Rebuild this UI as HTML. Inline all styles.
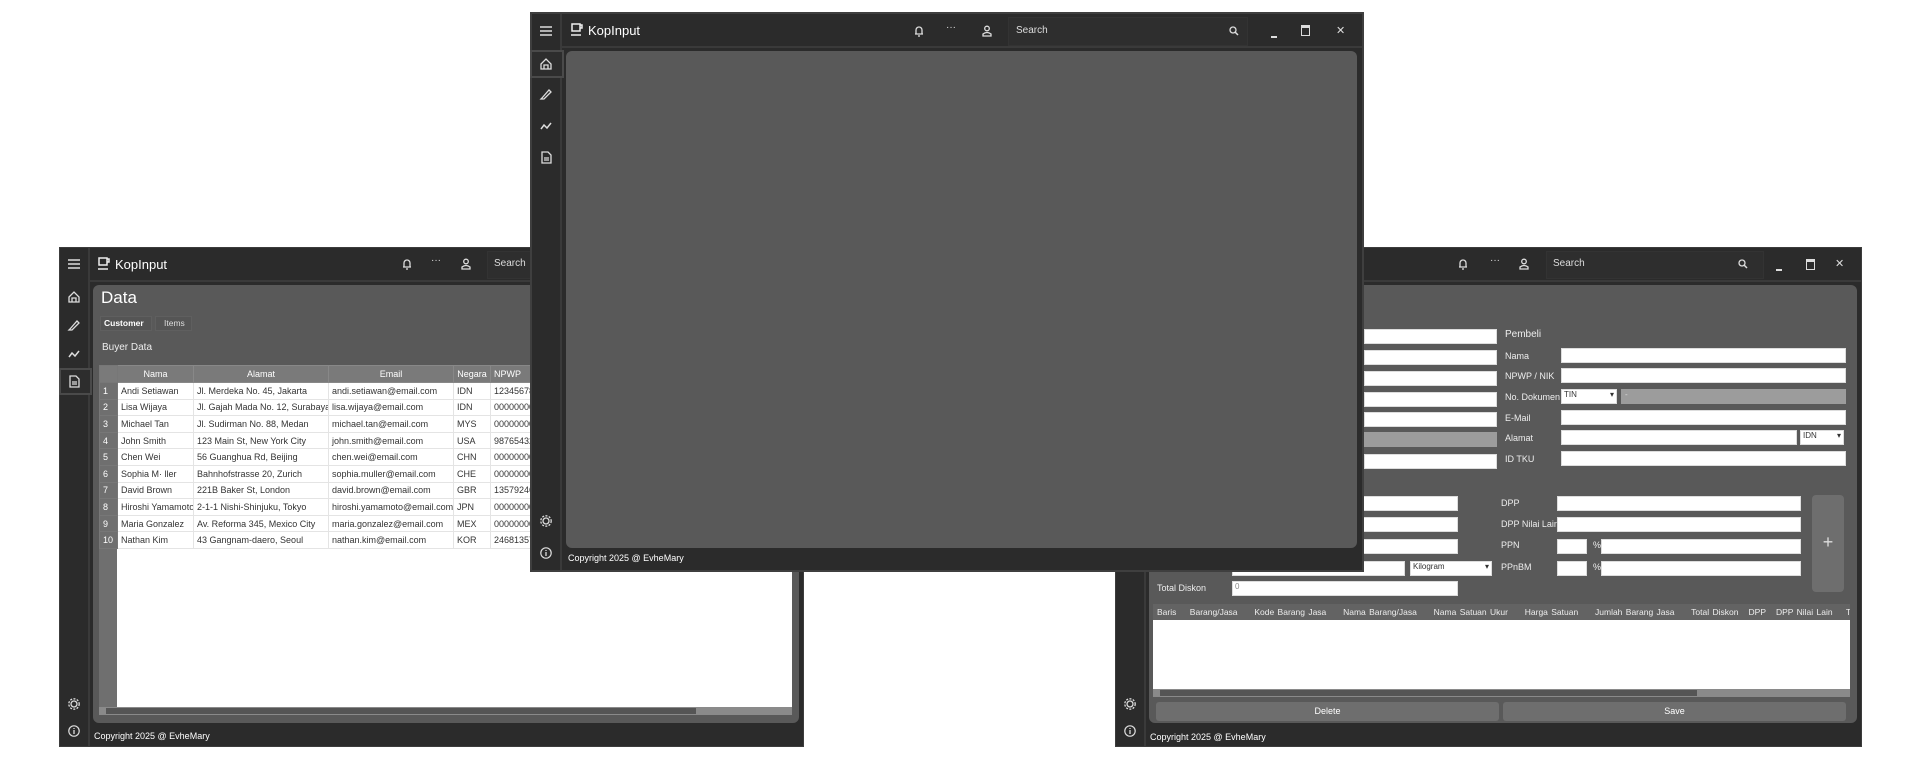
<!DOCTYPE html>
<html><head><meta charset="utf-8"><style>
*{box-sizing:border-box;margin:0;padding:0}
body{width:1920px;height:765px;background:#fff;position:relative;overflow:hidden;font-family:"Liberation Sans",sans-serif;color:#fff}
.a{position:absolute}
.win{position:absolute;background:#2b2b2b;border:1px solid #3c3c3c}
.hdr{position:absolute;left:0;right:0;top:0;height:34px;background:#2b2b2b;border-bottom:2px solid #3a3a3a}
.side{position:absolute;left:0;top:0;bottom:0;width:30px;border-right:2px solid #3a3a3a;background:#2b2b2b}
.panel{position:absolute;background:#595959;border-radius:6px}
.t{font-size:10px;white-space:nowrap}
.in{position:absolute;background:#fff;height:15px;border:1px solid #ddd}
.gr{background:#9c9c9c;border-color:#9c9c9c}
.lbl{position:absolute;font-size:9px;color:#eee;white-space:nowrap}
svg{position:absolute;overflow:visible}
table{border-collapse:collapse;font-size:9px;color:#333}
td{height:16.6px;border:1px solid #e4e4e4;padding:0 3px;white-space:nowrap;overflow:hidden}
.f{position:absolute;left:0;top:0;width:100%;height:100%}
</style></head><body>

<!-- LEFT WINDOW -->
<div class="win" style="left:59px;top:247px;width:745px;height:500px">
 <div class="hdr"></div>
 <div class="side"></div>
 <svg style="left:7px;top:10px" width="14" height="12"><path d="M1 2H13M1 6H13M1 10H13" stroke="#ddd" stroke-width="1.5"/></svg>
 <svg style="left:37px;top:9px" width="14" height="15"><path d="M2 1H10V8H2Z M10 2H12V5H10 M1 12H11" stroke="#eee" fill="none" stroke-width="1.5"/></svg>
 <div class="a" style="left:55px;top:9px;font-size:13px;color:#fff">KopInput</div>
 <svg style="left:342px;top:10px" width="10" height="12"><path d="M2 9V5A3 3 0 0 1 8 5V9H2M1 9H9M5 10V12" stroke="#ddd" fill="none" stroke-width="1.3"/></svg>
 <div class="a t" style="left:371px;top:7px;color:#ddd">···</div>
 <svg style="left:401px;top:10px" width="10" height="12"><circle cx="5" cy="3.5" r="2.3" stroke="#ddd" fill="none" stroke-width="1.3"/><path d="M1 11V9Q5 6 9 9V11Z" stroke="#ddd" fill="none" stroke-width="1.3"/></svg>
 <div class="a" style="left:427px;top:3px;width:50px;height:28px;background:#2e2e2e;border:1px solid #333"></div>
 <div class="a t" style="left:434px;top:10px;color:#ddd">Search</div>
 <svg style="left:8px;top:43px" width="12" height="12"><path d="M1 6L6 1L11 6V11H1Z M4 11V7H8V11" stroke="#ddd" fill="none" stroke-width="1.3"/></svg>
 <svg style="left:8px;top:71px" width="12" height="12"><path d="M2 10L9 2L11 4L4 11L1 11Z" stroke="#ddd" fill="none" stroke-width="1.3"/></svg>
 <svg style="left:8px;top:100px" width="12" height="12"><path d="M1 9L4 5L7 8L11 3" stroke="#ddd" fill="none" stroke-width="1.5"/></svg>
 <div class="a" style="left:-1px;top:120px;width:33px;height:27px;border:2px solid #4a4a4a;background:#2d2d2d"></div>
 <svg style="left:9px;top:127px" width="11" height="13"><path d="M1 1H7L10 4V12H1Z M3 7H8M3 9H8" stroke="#ddd" fill="none" stroke-width="1.3"/></svg>
 <svg style="left:8px;top:450px" width="12" height="12"><circle cx="6" cy="6" r="3" stroke="#ddd" fill="none" stroke-width="1.3"/><circle cx="6" cy="6" r="5.2" stroke="#ddd" fill="none" stroke-width="1.3" stroke-dasharray="2 1.4"/></svg>
 <svg style="left:8px;top:477px" width="12" height="12"><circle cx="6" cy="6" r="5.2" stroke="#ddd" fill="none" stroke-width="1.2"/><path d="M6 5V9M6 3V4" stroke="#ddd" stroke-width="1.3"/></svg>
 <div class="panel" style="left:33px;top:37px;width:706px;height:438px"></div>
 <div class="a" style="left:41px;top:40px;font-size:17px">Data</div>
 <div class="a" style="left:40px;top:68px;width:52px;height:15px;background:#555;border:1px solid #5f5f5f"></div>
 <div class="a" style="left:44px;top:70px;font-size:8.5px;font-weight:bold">Customer</div>
 <div class="a" style="left:95px;top:68px;width:37px;height:15px;background:#555;border:1px solid #5f5f5f"></div>
 <div class="a" style="left:104px;top:70px;font-size:8.5px;color:#ddd">Items</div>
 <div class="a" style="left:42px;top:94px;font-size:10px;color:#eee">Buyer Data</div>
 <div class="a" style="left:39px;top:117px;width:693px;height:350px;background:#fff"></div>
 <div class="a" style="left:39px;top:117px;width:18px;height:350px;background:#6f6f6f"></div>
 <div class="a" style="left:39px;top:117px;width:693px;height:17px;background:#7a7a7a"></div>
 <table class="a" style="left:39px;top:117px;table-layout:fixed;width:700px">
  <colgroup><col style="width:18px"><col style="width:76px"><col style="width:135px"><col style="width:125px"><col style="width:37px"><col style="width:309px"></colgroup>
  <tr style="color:#fff;text-align:center"><td style="border-color:#777;height:17px"></td><td style="border-color:#888">Nama</td><td style="border-color:#888">Alamat</td><td style="border-color:#888">Email</td><td style="border-color:#888">Negara</td><td style="border-color:#888;text-align:left">NPWP</td></tr>
  <tr><td style="color:#fff;border-color:#777">1</td><td>Andi Setiawan</td><td>Jl. Merdeka No. 45, Jakarta</td><td>andi.setiawan@email.com</td><td>IDN</td><td>123456789</td></tr>
  <tr><td style="color:#fff;border-color:#777">2</td><td>Lisa Wijaya</td><td>Jl. Gajah Mada No. 12, Surabaya</td><td>lisa.wijaya@email.com</td><td>IDN</td><td>000000000</td></tr>
  <tr><td style="color:#fff;border-color:#777">3</td><td>Michael Tan</td><td>Jl. Sudirman No. 88, Medan</td><td>michael.tan@email.com</td><td>MYS</td><td>000000000</td></tr>
  <tr><td style="color:#fff;border-color:#777">4</td><td>John Smith</td><td>123 Main St, New York City</td><td>john.smith@email.com</td><td>USA</td><td>987654321</td></tr>
  <tr><td style="color:#fff;border-color:#777">5</td><td>Chen Wei</td><td>56 Guanghua Rd, Beijing</td><td>chen.wei@email.com</td><td>CHN</td><td>000000000</td></tr>
  <tr><td style="color:#fff;border-color:#777">6</td><td>Sophia M· ller</td><td>Bahnhofstrasse 20, Zurich</td><td>sophia.muller@email.com</td><td>CHE</td><td>000000000</td></tr>
  <tr><td style="color:#fff;border-color:#777">7</td><td>David Brown</td><td>221B Baker St, London</td><td>david.brown@email.com</td><td>GBR</td><td>135792468</td></tr>
  <tr><td style="color:#fff;border-color:#777">8</td><td>Hiroshi Yamamoto</td><td>2-1-1 Nishi-Shinjuku, Tokyo</td><td>hiroshi.yamamoto@email.com</td><td>JPN</td><td>000000000</td></tr>
  <tr><td style="color:#fff;border-color:#777">9</td><td>Maria Gonzalez</td><td>Av. Reforma 345, Mexico City</td><td>maria.gonzalez@email.com</td><td>MEX</td><td>000000000</td></tr>
  <tr><td style="color:#fff;border-color:#777">10</td><td>Nathan Kim</td><td>43 Gangnam-daero, Seoul</td><td>nathan.kim@email.com</td><td>KOR</td><td>246813579</td></tr>
 </table>
 <div class="a" style="left:39px;top:459px;width:693px;height:8px;background:#8a8a8a"></div>
 <div class="a" style="left:46px;top:460px;width:590px;height:6px;background:#555"></div>
 <div class="a t" style="left:34px;top:483px;font-size:9px">Copyright 2025 @ EvheMary</div>
</div>

<!-- RIGHT WINDOW -->
<div class="win" style="left:1115px;top:247px;width:747px;height:500px">
 <div class="hdr"></div>
 <div class="side"></div>
 <svg style="left:342px;top:10px" width="10" height="12"><path d="M2 9V5A3 3 0 0 1 8 5V9H2M1 9H9M5 10V12" stroke="#ddd" fill="none" stroke-width="1.3"/></svg>
 <div class="a t" style="left:374px;top:7px;color:#ddd">···</div>
 <svg style="left:403px;top:10px" width="10" height="12"><circle cx="5" cy="3.5" r="2.3" stroke="#ddd" fill="none" stroke-width="1.3"/><path d="M1 11V9Q5 6 9 9V11Z" stroke="#ddd" fill="none" stroke-width="1.3"/></svg>
 <div class="a" style="left:430px;top:3px;width:218px;height:28px;background:#2e2e2e;border:1px solid #333"></div>
 <div class="a t" style="left:437px;top:10px;color:#ddd">Search</div>
 <svg style="left:622px;top:11px" width="10" height="10"><circle cx="4" cy="4" r="3" stroke="#ddd" fill="none" stroke-width="1.3"/><path d="M6 6L9 9" stroke="#ddd" stroke-width="1.5"/></svg>
 <div class="a" style="left:660px;top:21px;width:6px;height:1.5px;background:#ddd"></div>
 <div class="a" style="left:690px;top:11px;width:9px;height:11px;border:1.5px solid #ddd;border-top-width:3px"></div>
 <div class="a" style="left:719px;top:9px;font-size:11px;color:#ddd">✕</div>
 <svg style="left:8px;top:450px" width="12" height="12"><circle cx="6" cy="6" r="3" stroke="#ddd" fill="none" stroke-width="1.3"/><circle cx="6" cy="6" r="5.2" stroke="#ddd" fill="none" stroke-width="1.3" stroke-dasharray="2 1.4"/></svg>
 <svg style="left:8px;top:477px" width="12" height="12"><circle cx="6" cy="6" r="5.2" stroke="#ddd" fill="none" stroke-width="1.2"/><path d="M6 5V9M6 3V4" stroke="#ddd" stroke-width="1.3"/></svg>
 <div class="panel" style="left:33px;top:37px;width:708px;height:438px"></div>
 <div class="a" style="left:0;top:-7px;width:747px;height:500px">
 <div class="in" style="left:248px;top:88px;width:133px"></div>
 <div class="in" style="left:248px;top:109px;width:133px"></div>
 <div class="in" style="left:248px;top:130px;width:133px"></div>
 <div class="in" style="left:248px;top:151px;width:133px"></div>
 <div class="in" style="left:248px;top:171px;width:133px"></div>
 <div class="in gr" style="left:248px;top:191px;width:133px"></div>
 <div class="in" style="left:248px;top:213px;width:133px"></div>
 <div class="lbl" style="left:389px;top:88px;font-size:10px">Pembeli</div>
 <div class="lbl" style="left:389px;top:110px">Nama</div>
 <div class="lbl" style="left:389px;top:130px">NPWP / NIK</div>
 <div class="lbl" style="left:389px;top:151px">No. Dokumen</div>
 <div class="lbl" style="left:389px;top:172px">E-Mail</div>
 <div class="lbl" style="left:389px;top:192px">Alamat</div>
 <div class="lbl" style="left:389px;top:213px">ID TKU</div>
 <div class="in" style="left:445px;top:107px;width:285px"></div>
 <div class="in" style="left:445px;top:127px;width:285px"></div>
 <div class="in" style="left:445px;top:148px;width:56px;font-size:8px;color:#333;padding-left:2px">TIN<span style="position:absolute;right:2px;top:0">▾</span></div>
 <div class="in gr" style="left:505px;top:148px;width:225px;color:#ddd;font-size:8px;padding-left:3px">-</div>
 <div class="in" style="left:445px;top:169px;width:285px"></div>
 <div class="in" style="left:445px;top:189px;width:236px"></div>
 <div class="in" style="left:684px;top:189px;width:44px;font-size:8px;color:#333;padding-left:2px">IDN<span style="position:absolute;right:2px;top:0">▾</span></div>
 <div class="in" style="left:445px;top:210px;width:285px"></div>
 <div class="in" style="left:116px;top:255px;width:226px"></div>
 <div class="in" style="left:116px;top:276px;width:226px"></div>
 <div class="in" style="left:116px;top:298px;width:226px"></div>
 <div class="in" style="left:116px;top:320px;width:173px"></div>
 <div class="in" style="left:294px;top:320px;width:82px;font-size:8px;color:#333;padding-left:2px">Kilogram<span style="position:absolute;right:2px;top:0">▾</span></div>
 <div class="lbl" style="left:385px;top:257px">DPP</div>
 <div class="lbl" style="left:385px;top:278px">DPP Nilai Lain</div>
 <div class="lbl" style="left:385px;top:299px">PPN</div>
 <div class="lbl" style="left:385px;top:321px">PPnBM</div>
 <div class="in" style="left:441px;top:255px;width:244px"></div>
 <div class="in" style="left:441px;top:276px;width:244px"></div>
 <div class="in" style="left:441px;top:298px;width:30px"></div>
 <div class="lbl" style="left:477px;top:299px">%</div>
 <div class="in" style="left:485px;top:298px;width:200px"></div>
 <div class="in" style="left:441px;top:320px;width:30px"></div>
 <div class="lbl" style="left:477px;top:321px">%</div>
 <div class="in" style="left:485px;top:320px;width:200px"></div>
 <div class="a" style="left:696px;top:254px;width:32px;height:97px;background:#6e6e6e;border-radius:4px;color:#ddd;font-size:18px;text-align:center;line-height:95px">+</div>
 <div class="lbl" style="left:41px;top:342px">Total Diskon</div>
 <div class="in" style="left:116px;top:340px;width:226px;font-size:8px;color:#888;padding-left:2px">0</div>
 </div>
 <div class="a" style="left:37px;top:356px;width:697px;height:93px;background:#fff"></div>
 <div class="a" style="left:37px;top:356px;width:697px;height:16px;background:#636363;font-size:8.5px;color:#eee;white-space:nowrap;overflow:hidden;padding:3px 4px;word-spacing:1px">Baris &nbsp;&nbsp; Barang/Jasa &nbsp;&nbsp;&nbsp; Kode Barang Jasa &nbsp;&nbsp;&nbsp; Nama Barang/Jasa &nbsp;&nbsp;&nbsp; Nama Satuan Ukur &nbsp;&nbsp;&nbsp; Harga Satuan &nbsp;&nbsp;&nbsp; Jumlah Barang Jasa &nbsp;&nbsp;&nbsp; Total Diskon &nbsp; DPP &nbsp; DPP Nilai Lain &nbsp;&nbsp; Tarif PP</div>
 <div class="a" style="left:37px;top:441px;width:697px;height:8px;background:#8a8a8a"></div>
 <div class="a" style="left:44px;top:442px;width:537px;height:6px;background:#555"></div>
 <div class="a" style="left:40px;top:454px;width:343px;height:19px;background:#6e6e6e;border-radius:3px;font-size:9px;text-align:center;line-height:19px">Delete</div>
 <div class="a" style="left:387px;top:454px;width:343px;height:19px;background:#6e6e6e;border-radius:3px;font-size:9px;text-align:center;line-height:19px">Save</div>
 <div class="a t" style="left:34px;top:484px;font-size:9px">Copyright 2025 @ EvheMary</div>
</div>

<!-- MIDDLE WINDOW -->
<div class="win" style="left:530px;top:12px;width:834px;height:560px;border:2px solid #3f3f3f">
 <div class="hdr"></div>
 <div class="side"></div>
 <svg style="left:7px;top:11px" width="14" height="12"><path d="M1 2H13M1 6H13M1 10H13" stroke="#ddd" stroke-width="1.5"/></svg>
 <svg style="left:38px;top:9px" width="14" height="15"><path d="M2 1H10V8H2Z M10 2H12V5H10 M1 12H11" stroke="#eee" fill="none" stroke-width="1.5"/></svg>
 <div class="a" style="left:56px;top:9px;font-size:13px;color:#fff">KopInput</div>
 <svg style="left:382px;top:11px" width="10" height="12"><path d="M2 9V5A3 3 0 0 1 8 5V9H2M1 9H9M5 10V12" stroke="#ddd" fill="none" stroke-width="1.3"/></svg>
 <div class="a t" style="left:414px;top:8px;color:#ddd">···</div>
 <svg style="left:450px;top:11px" width="10" height="12"><circle cx="5" cy="3.5" r="2.3" stroke="#ddd" fill="none" stroke-width="1.3"/><path d="M1 11V9Q5 6 9 9V11Z" stroke="#ddd" fill="none" stroke-width="1.3"/></svg>
 <div class="a" style="left:476px;top:3px;width:240px;height:29px;background:#2e2e2e;border:1px solid #333"></div>
 <div class="a t" style="left:484px;top:11px;color:#ddd">Search</div>
 <svg style="left:697px;top:12px" width="10" height="10"><circle cx="4" cy="4" r="3" stroke="#ddd" fill="none" stroke-width="1.3"/><path d="M6 6L9 9" stroke="#ddd" stroke-width="1.5"/></svg>
 <div class="a" style="left:739px;top:22px;width:6px;height:1.5px;background:#ddd"></div>
 <div class="a" style="left:769px;top:11px;width:9px;height:11px;border:1.5px solid #ddd;border-top-width:3px"></div>
 <div class="a" style="left:804px;top:10px;font-size:11px;color:#ddd">✕</div>
 <div class="a" style="left:-2px;top:36px;width:34px;height:28px;border:2px solid #4a4a4a;background:#2d2d2d"></div>
 <svg style="left:8px;top:44px" width="12" height="12"><path d="M1 6L6 1L11 6V11H1Z M4 11V7H8V11" stroke="#ddd" fill="none" stroke-width="1.3"/></svg>
 <svg style="left:8px;top:74px" width="12" height="12"><path d="M2 10L9 2L11 4L4 11L1 11Z" stroke="#ddd" fill="none" stroke-width="1.3"/></svg>
 <svg style="left:8px;top:106px" width="12" height="12"><path d="M1 9L4 5L7 8L11 3" stroke="#ddd" fill="none" stroke-width="1.5"/></svg>
 <svg style="left:9px;top:137px" width="11" height="13"><path d="M1 1H7L10 4V12H1Z M3 7H8M3 9H8" stroke="#ddd" fill="none" stroke-width="1.3"/></svg>
 <svg style="left:8px;top:501px" width="12" height="12"><circle cx="6" cy="6" r="3" stroke="#ddd" fill="none" stroke-width="1.3"/><circle cx="6" cy="6" r="5.2" stroke="#ddd" fill="none" stroke-width="1.3" stroke-dasharray="2 1.4"/></svg>
 <svg style="left:8px;top:533px" width="12" height="12"><circle cx="6" cy="6" r="5.2" stroke="#ddd" fill="none" stroke-width="1.2"/><path d="M6 5V9M6 3V4" stroke="#ddd" stroke-width="1.3"/></svg>
 <div class="panel" style="left:34px;top:37px;width:791px;height:497px"></div>
 <div class="a t" style="left:36px;top:539px;font-size:9px">Copyright 2025 @ EvheMary</div>
</div>

</body></html>
